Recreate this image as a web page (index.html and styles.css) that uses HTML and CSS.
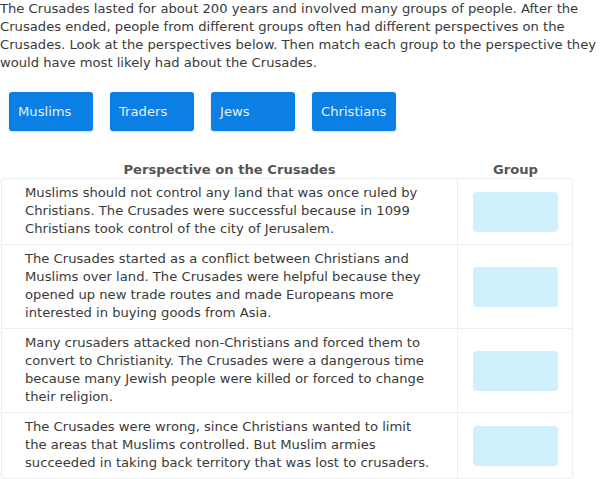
FILE: index.html
```html
<!DOCTYPE html>
<html>
<head>
<meta charset="utf-8">
<link rel="stylesheet" href="styles.css">
</head>
<body>
<p class="intro">The Crusades lasted for about 200 years and involved many groups of people. After the Crusades ended, people from different groups often had different perspectives on the Crusades. Look at the perspectives below. Then match each group to the perspective they would have most likely had about the Crusades.</p>
<div class="choices">
  <div class="choice">Muslims</div>
  <div class="choice">Traders</div>
  <div class="choice">Jews</div>
  <div class="choice">Christians</div>
</div>
<div class="table">
  <div class="head">
    <div class="h-persp">Perspective on the Crusades</div>
    <div class="h-group">Group</div>
  </div>
  <div class="box">
    <div class="row">
      <div class="persp">Muslims should not control any land that was once ruled by Christians. The Crusades were successful because in 1099 Christians took control of the city of Jerusalem.</div>
      <div class="group"><div class="drop"></div></div>
    </div>
    <div class="row">
      <div class="persp">The Crusades started as a conflict between Christians and Muslims over land. The Crusades were helpful because they opened up new trade routes and made Europeans more interested in buying goods from Asia.</div>
      <div class="group"><div class="drop"></div></div>
    </div>
    <div class="row">
      <div class="persp">Many crusaders attacked non-Christians and forced them to convert to Christianity. The Crusades were a dangerous time because many Jewish people were killed or forced to change their religion.</div>
      <div class="group"><div class="drop"></div></div>
    </div>
    <div class="row">
      <div class="persp">The Crusades were wrong, since Christians wanted to limit the areas that Muslims controlled. But Muslim armies succeeded in taking back territory that was lost to crusaders.</div>
      <div class="group"><div class="drop"></div></div>
    </div>
  </div>
</div>
</body>
</html>
```
FILE: styles.css
```css
html, body {
  margin: 0;
  padding: 0;
  background: #fff;
}
body {
  font-family: "DejaVu Sans", Verdana, sans-serif;
  font-size: 13.15px;
  line-height: 18px;
  color: #3a3a3a;
}
.intro {
  margin: 0;
  width: 600px;
}
.choices {
  display: flex;
  gap: 17px;
  margin: 20px 0 0 9px;
}
.choice {
  width: 84px;
  height: 39px;
  box-sizing: border-box;
  padding-left: 9px;
  display: flex;
  align-items: center;
  background: #0b7fe3;
  color: #e3f0fc;
  border-radius: 3px;
  box-shadow: 0 1px 2px rgba(0,0,0,0.15);
}
.table {
  margin: 30px 0 0 1px;
  width: 572px;
}
.head {
  display: flex;
  font-weight: bold;
  color: #555;
  height: 17px;
}
.h-persp {
  width: 457px;
  text-align: center;
}
.h-group {
  flex: 1;
  text-align: center;
}
.box {
  border: 1px solid #eceef2;
  border-radius: 3px;
  box-shadow: 0 1px 2px rgba(0,0,0,0.05);
}
.row {
  display: flex;
  border-top: 1px solid #eceef2;
}
.row:first-child {
  border-top: none;
}
.persp {
  width: 456px;
  box-sizing: border-box;
  padding: 5px 27px 6px 23px;
  border-right: 1px solid #eceef2;
}
.group {
  flex: 1;
  display: flex;
  align-items: center;
  justify-content: center;
}
.drop {
  width: 85px;
  height: 40px;
  background: #d1f0fd;
  border-radius: 4px;
}
```
